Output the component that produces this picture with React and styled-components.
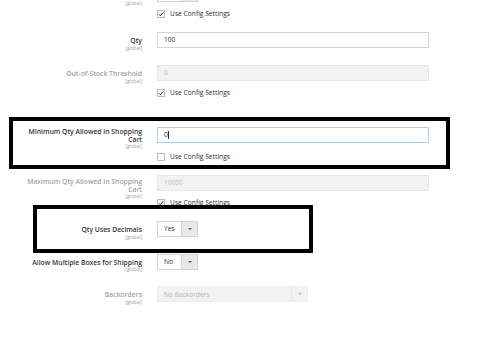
import React from "react";
import styled, { createGlobalStyle } from "styled-components";

const GlobalStyle = createGlobalStyle`
  html, body {
    margin: 0;
    padding: 0;
    background: #fff;
  }
  body {
    font-family: "Open Sans", "Liberation Sans", sans-serif;
    color: #303030;
    overflow: hidden;
  }
`;

const Page = styled.div`
  position: relative;
  width: 478px;
  height: 337px;
  overflow: hidden;
`;

const Form = styled.div`
  display: flex;
  flex-direction: column;
  margin-top: -14px;
`;

const FieldRow = styled.div`
  display: grid;
  grid-template-columns: 117px 272px;
  column-gap: 15px;
  padding-left: 25px;
  margin-bottom: ${(p) => (p.$extra ? 30 : 14)}px;
  align-items: start;
`;

const Label = styled.div`
  grid-row: 1 / span 2;
  text-align: right;
  padding-top: ${(p) => p.$top}px;
  color: ${(p) => (p.$disabled ? "#a3a3a3" : "#333")};
  font-weight: 600;
  font-size: 6.8px;
  line-height: 7.8px;
`;

const Scope = styled.div`
  font-size: 4.8px;
  line-height: 6px;
  font-weight: 400;
  color: #a0a0a0;
`;

const Control = styled.div`
  display: flex;
  flex-direction: column;
  align-items: flex-start;
`;

const Input = styled.div`
  box-sizing: border-box;
  width: ${(p) => p.$w}px;
  height: 16px;
  border: 1px solid ${(p) => (p.$focus ? "#a9d0f2" : p.$disabled ? "#e6e6e6" : "#d4d4d4")};
  background: ${(p) => (p.$disabled ? "#f2f2f2" : "#fff")};
  color: ${(p) => (p.$disabled ? "#bdbdbd" : "#303030")};
  font-size: 6.6px;
  line-height: 14px;
  padding-left: 6px;
  display: flex;
  align-items: center;
`;

const Caret = styled.span`
  display: inline-block;
  width: 0.6px;
  height: 8px;
  background: #303030;
  margin-left: 0.5px;
`;

const Select = styled.div`
  box-sizing: border-box;
  width: ${(p) => p.$w}px;
  height: 16px;
  border: 1px solid ${(p) => (p.$disabled ? "#ececec" : "#d4d4d4")};
  background: ${(p) => (p.$disabled ? "#f2f2f2" : "#fff")};
  display: flex;
  font-size: 6.6px;
`;

const SelectValue = styled.div`
  flex: 1;
  display: flex;
  align-items: center;
  padding-left: 6px;
  color: ${(p) => (p.$disabled ? "#b5b5b5" : "#303030")};
`;

const SelectArrow = styled.div`
  width: 15px;
  border-left: 1px solid ${(p) => (p.$disabled ? "#e6e6e6" : "#d4d4d4")};
  background: ${(p) => (p.$disabled ? "#f2f2f2" : "#e8e8e8")};
  display: flex;
  align-items: center;
  justify-content: center;
  &::after {
    content: "";
    border-left: 2px solid transparent;
    border-right: 2px solid transparent;
    border-top: 2.5px solid ${(p) => (p.$disabled ? "#b5b5b5" : "#555")};
  }
`;

const CheckLine = styled.label`
  display: flex;
  align-items: center;
  gap: 5px;
  margin-top: ${(p) => p.$gap}px;
  font-size: 6.7px;
  line-height: 8px;
  color: #303030;
`;

const Box = styled.span`
  box-sizing: border-box;
  width: 8px;
  height: 8px;
  border: 1px solid #bdbdbd;
  background: #fff;
  display: flex;
  align-items: center;
  justify-content: center;
`;

const Mark = styled.svg`
  width: 6px;
  height: 6px;
`;

const Annotation = styled.div`
  position: absolute;
  left: ${(p) => p.$x}px;
  top: ${(p) => p.$y}px;
  width: ${(p) => p.$w}px;
  height: ${(p) => p.$h}px;
  box-sizing: border-box;
  border: 4px solid #000;
  pointer-events: none;
`;

const UseConfig = ({ checked, gap = 8 }) => (
  <CheckLine $gap={gap}>
    <Box>
      {checked && (
        <Mark viewBox="0 0 6 6">
          <path d="M0.8 3.2 L2.4 4.8 L5.3 1.2" fill="none" stroke="#303030" strokeWidth="1" />
        </Mark>
      )}
    </Box>
    Use Config Settings
  </CheckLine>
);

const Field = ({ label, disabled, top = 5, extra, children }) => (
  <FieldRow $extra={extra}>
    <Label $disabled={disabled} $top={top}>
      {label}
      <Scope>[global]</Scope>
    </Label>
    <Control>{children}</Control>
  </FieldRow>
);

const YesNo = ({ value, w = 41, disabled }) => (
  <Select $w={w} $disabled={disabled}>
    <SelectValue $disabled={disabled}>{value}</SelectValue>
    <SelectArrow $disabled={disabled} />
  </Select>
);

export default function App() {
  return (
    <Page>
      <GlobalStyle />
      <Form>
        <Field label="" top={14}>
          <YesNo value="" />
          <UseConfig checked />
        </Field>
        <Field label="Qty">
          <Input $w={272}>100</Input>
        </Field>
        <Field label="Out-of-Stock Threshold" disabled extra>
          <Input $w={272} $disabled>0</Input>
          <UseConfig checked />
        </Field>
        <Field label="Minimum Qty Allowed in Shopping Cart" top={1}>
          <Input $w={272} $focus>
            0<Caret />
          </Input>
          <UseConfig gap={10} />
        </Field>
        <Field label="Maximum Qty Allowed in Shopping Cart" disabled top={3}>
          <Input $w={272} $disabled>10000</Input>
          <UseConfig checked />
        </Field>
        <Field label="Qty Uses Decimals">
          <YesNo value="Yes" />
        </Field>
        <Field label="Allow Multiple Boxes for Shipping">
          <YesNo value="No" />
        </Field>
        <Field label="Backorders" disabled>
          <YesNo value="No Backorders" w={151} disabled />
        </Field>
      </Form>
      <Annotation $x={9} $y={117} $w={441} $h={52} />
      <Annotation $x={33} $y={205} $w={280} $h={48} />
    </Page>
  );
}
